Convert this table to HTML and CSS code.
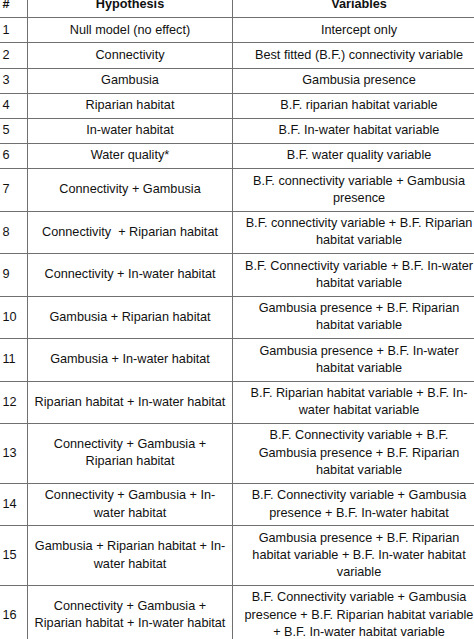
FILE: index.html
```html
<!DOCTYPE html>
<html>
<head>
<meta charset="utf-8">
<link rel="stylesheet" href="styles.css">
</head>
<body>
<div class="frame">
<table class="hyp">
<colgroup><col class="c-num"><col class="c-hyp"><col class="c-var"></colgroup>
<thead>
<tr><th class="num">#</th><th>Hypothesis</th><th>Variables</th></tr>
</thead>
<tbody>
<tr><td class="num">1</td><td>Null model (no effect)</td><td>Intercept only</td></tr>
<tr><td class="num">2</td><td>Connectivity</td><td>Best fitted (B.F.) connectivity variable</td></tr>
<tr><td class="num">3</td><td>Gambusia</td><td>Gambusia presence</td></tr>
<tr><td class="num">4</td><td>Riparian habitat</td><td>B.F. riparian habitat variable</td></tr>
<tr><td class="num">5</td><td>In-water habitat</td><td>B.F. In-water habitat variable</td></tr>
<tr><td class="num">6</td><td>Water quality*</td><td>B.F. water quality variable</td></tr>
<tr><td class="num">7</td><td>Connectivity + Gambusia</td><td>B.F. connectivity variable + Gambusia presence</td></tr>
<tr><td class="num">8</td><td>Connectivity&nbsp; + Riparian habitat</td><td>B.F. connectivity variable + B.F. Riparian habitat variable</td></tr>
<tr><td class="num">9</td><td>Connectivity + In-water habitat</td><td>B.F. Connectivity variable + B.F. In-water habitat variable</td></tr>
<tr><td class="num">10</td><td>Gambusia + Riparian habitat</td><td>Gambusia presence + B.F. Riparian habitat variable</td></tr>
<tr><td class="num">11</td><td>Gambusia + In-water habitat</td><td>Gambusia presence + B.F. In-water habitat variable</td></tr>
<tr><td class="num">12</td><td>Riparian habitat + In-water habitat</td><td>B.F. Riparian habitat variable + B.F. In-water habitat variable</td></tr>
<tr><td class="num">13</td><td>Connectivity + Gambusia +<br>Riparian habitat</td><td>B.F. Connectivity variable + B.F.<br>Gambusia presence + B.F. Riparian habitat variable</td></tr>
<tr><td class="num">14</td><td>Connectivity + Gambusia + In-water habitat</td><td>B.F. Connectivity variable + Gambusia presence + B.F. In-water habitat</td></tr>
<tr><td class="num">15</td><td>Gambusia + Riparian habitat + In-water habitat</td><td>Gambusia presence + B.F. Riparian habitat variable + B.F. In-water habitat variable</td></tr>
<tr><td class="num">16</td><td>Connectivity + Gambusia +<br>Riparian habitat + In-water habitat</td><td>B.F. Connectivity variable + Gambusia presence + B.F. Riparian habitat variable + B.F. In-water habitat variable</td></tr>
</tbody>
</table>
</div>
</body>
</html>
```

FILE: styles.css
```css
html, body {
  margin: 0;
  padding: 0;
  background: #ffffff;
}

.frame {
  width: 474px;
  height: 639px;
  overflow: hidden;
}

.hyp {
  border-collapse: collapse;
  table-layout: fixed;
  width: 491px;
  margin-top: -8px;
  margin-left: -6px;
  font-family: "Liberation Sans", Arial, sans-serif;
  font-size: 12.7px;
  line-height: 17.3px;
  color: #111111;
}

.c-num { width: 33px; }
.c-hyp { width: 205px; }
.c-var { width: 253px; }

.hyp th,
.hyp td {
  border: 1px solid #707070;
  padding: 3.45px 4px;
  text-align: center;
  vertical-align: middle;
}

.hyp td:last-child,
.hyp th:last-child {
  padding: 3.45px 8px;
}

.hyp th {
  font-weight: bold;
}

.hyp .num {
  text-align: left;
  padding-left: 7.5px;
}
```
